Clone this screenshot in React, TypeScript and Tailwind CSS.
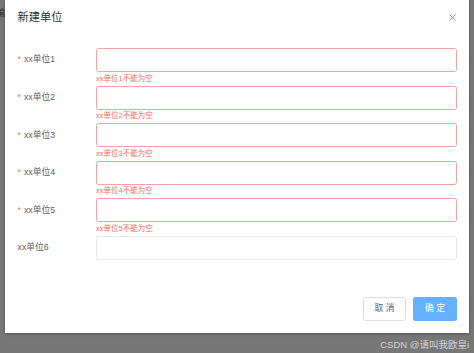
import React from 'react';

const fields = [
  { name: 'xx单位1', required: true },
  { name: 'xx单位2', required: true },
  { name: 'xx单位3', required: true },
  { name: 'xx单位4', required: true },
  { name: 'xx单位5', required: true },
  { name: 'xx单位6', required: false },
];

export default function App() {
  return (
    <div className="relative w-[474px] h-[353px] overflow-hidden bg-[#777777] font-['Liberation_Sans','Noto_Sans_CJK_SC',sans-serif]">
      {/* dialog */}
      <div className="ml-[5px] w-[464px] h-[333px] bg-white flex flex-col shadow-[0_1px_3px_rgba(0,0,0,0.3)]">
        <div className="flex items-center justify-between pl-[12.5px] pr-[13px] pt-[10px]">
          <span className="text-[11.25px] leading-[15px] text-[#303133]">新建单位</span>
          <svg width="7" height="7" viewBox="0 0 7 7" className="mt-[-1px]">
            <path d="M0.5 0.5 L6.5 6.5 M6.5 0.5 L0.5 6.5" stroke="#909399" strokeWidth="0.9" />
          </svg>
        </div>

        <div className="mt-[23px] pl-[12.5px] pr-[12px]">
          {fields.map((f) => (
            <div key={f.name} className="flex">
              <div className="w-[78.5px] h-[24px] flex items-center text-[8.75px] text-[#606266]">
                {f.required && <span className="text-[#f56c6c] mr-[3px]">*</span>}
                <span>{f.name}</span>
              </div>
              <div className="flex-1 flex flex-col">
                <div
                  className={
                    f.required
                      ? 'h-[24px] rounded-[2.5px] border border-[#f3a3a6] bg-white'
                      : 'h-[24px] rounded-[2.5px] border border-[#e4e6eb] bg-white'
                  }
                />
                <div className="h-[13.6px] pt-[2.5px] text-[7.5px] leading-none text-[#f56c6c]">
                  {f.required ? `${f.name}不能为空` : ''}
                </div>
              </div>
            </div>
          ))}
        </div>

        <div className="mt-auto flex justify-end gap-[7px] pr-[12px] pb-[12px]">
          <button className="w-[43px] h-[24px] rounded-[2.5px] border border-[#dcdfe6] bg-white text-[8.75px] text-[#606266]">
            取 消
          </button>
          <button className="w-[44px] h-[24px] rounded-[2.5px] bg-[#66b1ff] text-[8.75px] text-white">
            确 定
          </button>
        </div>
      </div>

      <div className="absolute left-[-4px] top-[9px] text-[9px] leading-none text-[#333]">编</div>
      <div className="absolute right-[5px] bottom-[4px] text-[9.5px] leading-none text-[#d4d4d4]">
        CSDN @请叫我欧皇i
      </div>
    </div>
  );
}
